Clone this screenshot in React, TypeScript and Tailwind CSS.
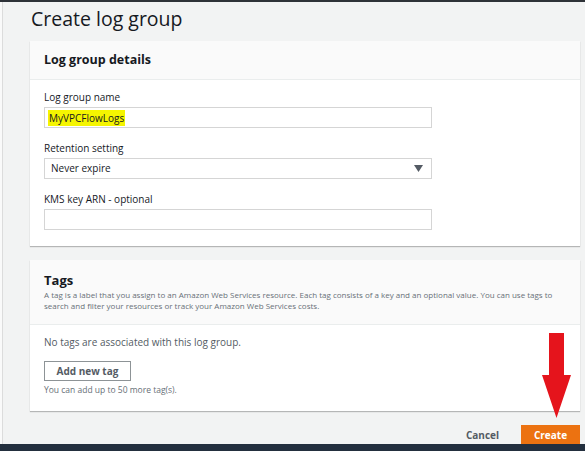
const font = { fontFamily: '"Open Sans", "Noto Sans", Arial, sans-serif' };

const Label = ({ children }: { children: React.ReactNode }) => (
  <div className="h-[14px] text-[10px] leading-[14px] text-[#16191f]">{children}</div>
);

const TextBox = ({ children }: { children?: React.ReactNode }) => (
  <div className="mt-[3px] flex h-[21px] w-[388px] items-center border border-[#d5d5d5] bg-white px-[3px] text-[10px] text-[#16191f]">
    {children}
  </div>
);

const CreateLogGroup = () => {
  return (
    <div className="relative flex h-[451px] w-[585px] flex-col overflow-hidden bg-[#f2f3f3]" style={font}>
      <div className="h-[2px] shrink-0 bg-[#2e3238]" />
      <div className="flex min-h-0 flex-1">
        {/* collapsed side nav */}
        <div className="w-[3px] border-r border-[#dcdcdc] bg-[#fafafa]" />
        <div className="flex flex-1 flex-col pl-[27px] pr-[5px]">
          <h1 className="mt-[3px] h-[36px] shrink-0 pl-[1px] text-[19.5px] leading-[28px] text-[#16191f]">
            Create log group
          </h1>

          <section className="h-[205px] shrink-0 bg-white shadow-[0_1px_1px_rgba(0,0,0,0.25)]">
            <div className="flex h-[39px] items-center border-b border-[#eaeded] bg-[#fafafa] px-[14px] text-[12.5px] font-bold text-[#16191f]">
              Log group details
            </div>
            <div className="px-[14px] pt-[10px]">
              <Label>Log group name</Label>
              <TextBox>
                <span className="bg-[#f5f500] px-[1px] leading-[16px]">MyVPCFlowLogs</span>
              </TextBox>
              <div className="mt-[13px]">
                <Label>Retention setting</Label>
              </div>
              <div className="mt-[3px] flex h-[21px] w-[388px] items-center justify-between border border-[#d5d5d5] bg-white pl-[6px] pr-[8px] text-[10px] text-[#16191f]">
                <span>Never expire</span>
                <svg width="9" height="7" viewBox="0 0 9 7">
                  <path d="M0 0H9L4.5 7Z" fill="#545b64" />
                </svg>
              </div>
              <div className="mt-[13px]">
                <Label>KMS key ARN - optional</Label>
              </div>
              <TextBox />
            </div>
          </section>

          <section className="mt-[14px] h-[151px] shrink-0 bg-white shadow-[0_1px_1px_rgba(0,0,0,0.25)]">
            <div className="h-[65px] border-b border-[#eaeded] bg-[#fafafa] pl-[14px] pr-[8px] pt-[12px]">
              <div className="text-[13px] font-bold leading-[17px] text-[#16191f]">Tags</div>
              <p className="text-[8px] leading-[11px] text-[#687078]">
                A tag is a label that you assign to an Amazon Web Services resource. Each tag consists of a key and an
                optional value. You can use tags to search and filter your resources or track your Amazon Web Services
                costs.
              </p>
            </div>
            <div className="px-[14px] pt-[9px]">
              <div className="text-[10px] leading-[16px] text-[#545b64]">
                No tags are associated with this log group.
              </div>
              <button className="mt-[11px] flex h-[20px] w-[87px] items-center justify-center border border-[#8d9396] bg-white text-[10px] font-bold text-[#545b64]">
                Add new tag
              </button>
              <div className="mt-[3px] text-[8.5px] leading-[12px] text-[#687078]">
                You can add up to 50 more tag(s).
              </div>
            </div>
          </section>

          <div className="mt-[14px] flex shrink-0 items-center justify-end gap-[22px]">
            <span className="text-[10px] font-bold text-[#545b64]">Cancel</span>
            <button className="flex h-[20px] w-[59px] items-center justify-center bg-[#ec7211] text-[10px] font-bold text-white">
              Create
            </button>
          </div>
        </div>
      </div>
      <div className="h-[7px] shrink-0 bg-[#232f3e]" />

      {/* red pointer over the Create button */}
      <svg className="absolute left-[542px] top-[333px]" width="30" height="86" viewBox="0 0 30 86">
        <path d="M7 0H22V42H29L14.5 85L0 42H7Z" fill="#e5141c" />
      </svg>
    </div>
  );
};

export default function App() {
  return <CreateLogGroup />;
}
